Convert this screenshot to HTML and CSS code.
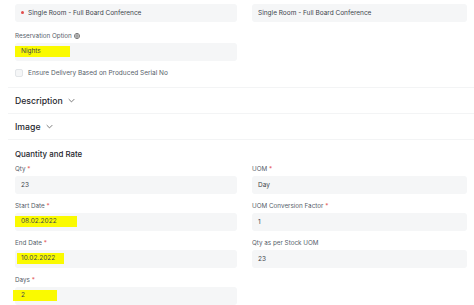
FILE: index.html
```html
<!DOCTYPE html>
<html>
	<head>
		<meta charset="UTF-8">
		<title>Item</title>
		<link rel="stylesheet" href="styles.css">
	</head>
	<body>
		<div class="form">
			<div class="section top">
				<div class="grid">
					<div class="col">
						<div class="input"><span class="dot"></span>Single Room - Full Board Conference</div>
						<div class="field">
							<label>Reservation Option
								<svg class="globe" viewBox="0 0 10 10" width="6" height="6">
									<circle cx="5" cy="5" r="4.3" fill="none" stroke="#555" stroke-width="1.2"/>
									<path d="M1 5h8M5 0.8c-2 2.5-2 5.9 0 8.4M5 0.8c2 2.5 2 5.9 0 8.4" fill="none" stroke="#555" stroke-width="0.9"/>
								</svg>
							</label>
							<div class="input"><span class="mark nights">Nights</span></div>
						</div>
						<div class="check"><span class="box"></span>Ensure Delivery Based on Produced Serial No</div>
					</div>
					<div class="col">
						<div class="input">Single Room - Full Board Conference</div>
					</div>
				</div>
			</div>

			<div class="section collapsed">
				<h3>Description <svg class="chev" viewBox="0 0 10 6" width="7" height="5"><path d="M1 1l4 4 4-4" fill="none" stroke="#555" stroke-width="1.1"/></svg></h3>
			</div>
			<div class="section collapsed">
				<h3>Image <svg class="chev" viewBox="0 0 10 6" width="7" height="5"><path d="M1 1l4 4 4-4" fill="none" stroke="#555" stroke-width="1.1"/></svg></h3>
			</div>

			<div class="section qty">
				<h4>Quantity and Rate</h4>
				<div class="grid">
					<div class="col">
						<div class="field">
							<label>Qty <span class="req">*</span></label>
							<div class="input">23</div>
						</div>
						<div class="field">
							<label>Start Date <span class="req">*</span></label>
							<div class="input"><span class="mark start">08.02.2022</span></div>
						</div>
						<div class="field">
							<label>End Date <span class="req">*</span></label>
							<div class="input"><span class="mark end">10.02.2022</span></div>
						</div>
						<div class="field">
							<label>Days <span class="req">*</span></label>
							<div class="input"><span class="mark days">2</span></div>
						</div>
					</div>
					<div class="col">
						<div class="field">
							<label>UOM <span class="req">*</span></label>
							<div class="input">Day</div>
						</div>
						<div class="field">
							<label>UOM Conversion Factor <span class="req">*</span></label>
							<div class="input">1</div>
						</div>
						<div class="field">
							<label>Qty as per Stock UOM</label>
							<div class="input">23</div>
						</div>
					</div>
				</div>
			</div>
		</div>
	</body>
</html>
```

FILE: styles.css
```css
body{margin:0;background:#fff;font-family:Inter,"Noto Sans",sans-serif;color:#1f272e;overflow:hidden;}
.form{padding-left:8px;}
.section{border-bottom:1px solid #f3f4f5;padding-left:7px;}
.grid{display:grid;grid-template-columns:222px 215px;column-gap:15px;}

.section.top{padding-top:4px;padding-bottom:9px;}
.input{height:18px;line-height:18px;background:#f5f6f7;border-radius:3px;
	font-size:6.5px;padding-left:6px;color:#3d454d;}
.input .dot{display:inline-block;width:3px;height:3px;border-radius:50%;background:#e24c4c;
	margin-right:4px;vertical-align:middle;position:relative;top:-1px;}

.field{margin-bottom:7px;}
.top .col > .input{margin-bottom:9px;}
label{display:block;font-size:6.3px;line-height:10px;color:#56606a;margin-bottom:2px;}
label .req{color:#e24c4c;}
.globe{vertical-align:-1px;}

.check{font-size:6.5px;color:#56606a;line-height:10px;display:flex;align-items:center;margin-top:4px;}
.check .box{width:6px;height:6px;border:1px solid #e2e5e8;border-radius:2px;background:#f5f6f7;margin-right:5px;}

.collapsed{height:25px;display:flex;align-items:center;}
h3{margin:0;font-size:8.7px;font-weight:500;color:#1f272e;}
.chev{margin-left:3px;vertical-align:1px;}

.section.qty{border-bottom:none;padding-top:8px;}
h4{margin:0 0 4px;font-size:7.9px;font-weight:500;line-height:12px;color:#1f272e;}

.mark{display:inline-block;background:#fafa00;height:11px;line-height:11px;margin-left:-6px;padding-left:6px;vertical-align:middle;position:relative;top:-1px;}
.mark.nights{width:49px;}
.mark.start{width:56px;}
.mark.end{margin-left:-4px;padding-left:4px;width:43px;}
.mark.days{margin-left:-8px;padding-left:8px;width:36px;}
```
